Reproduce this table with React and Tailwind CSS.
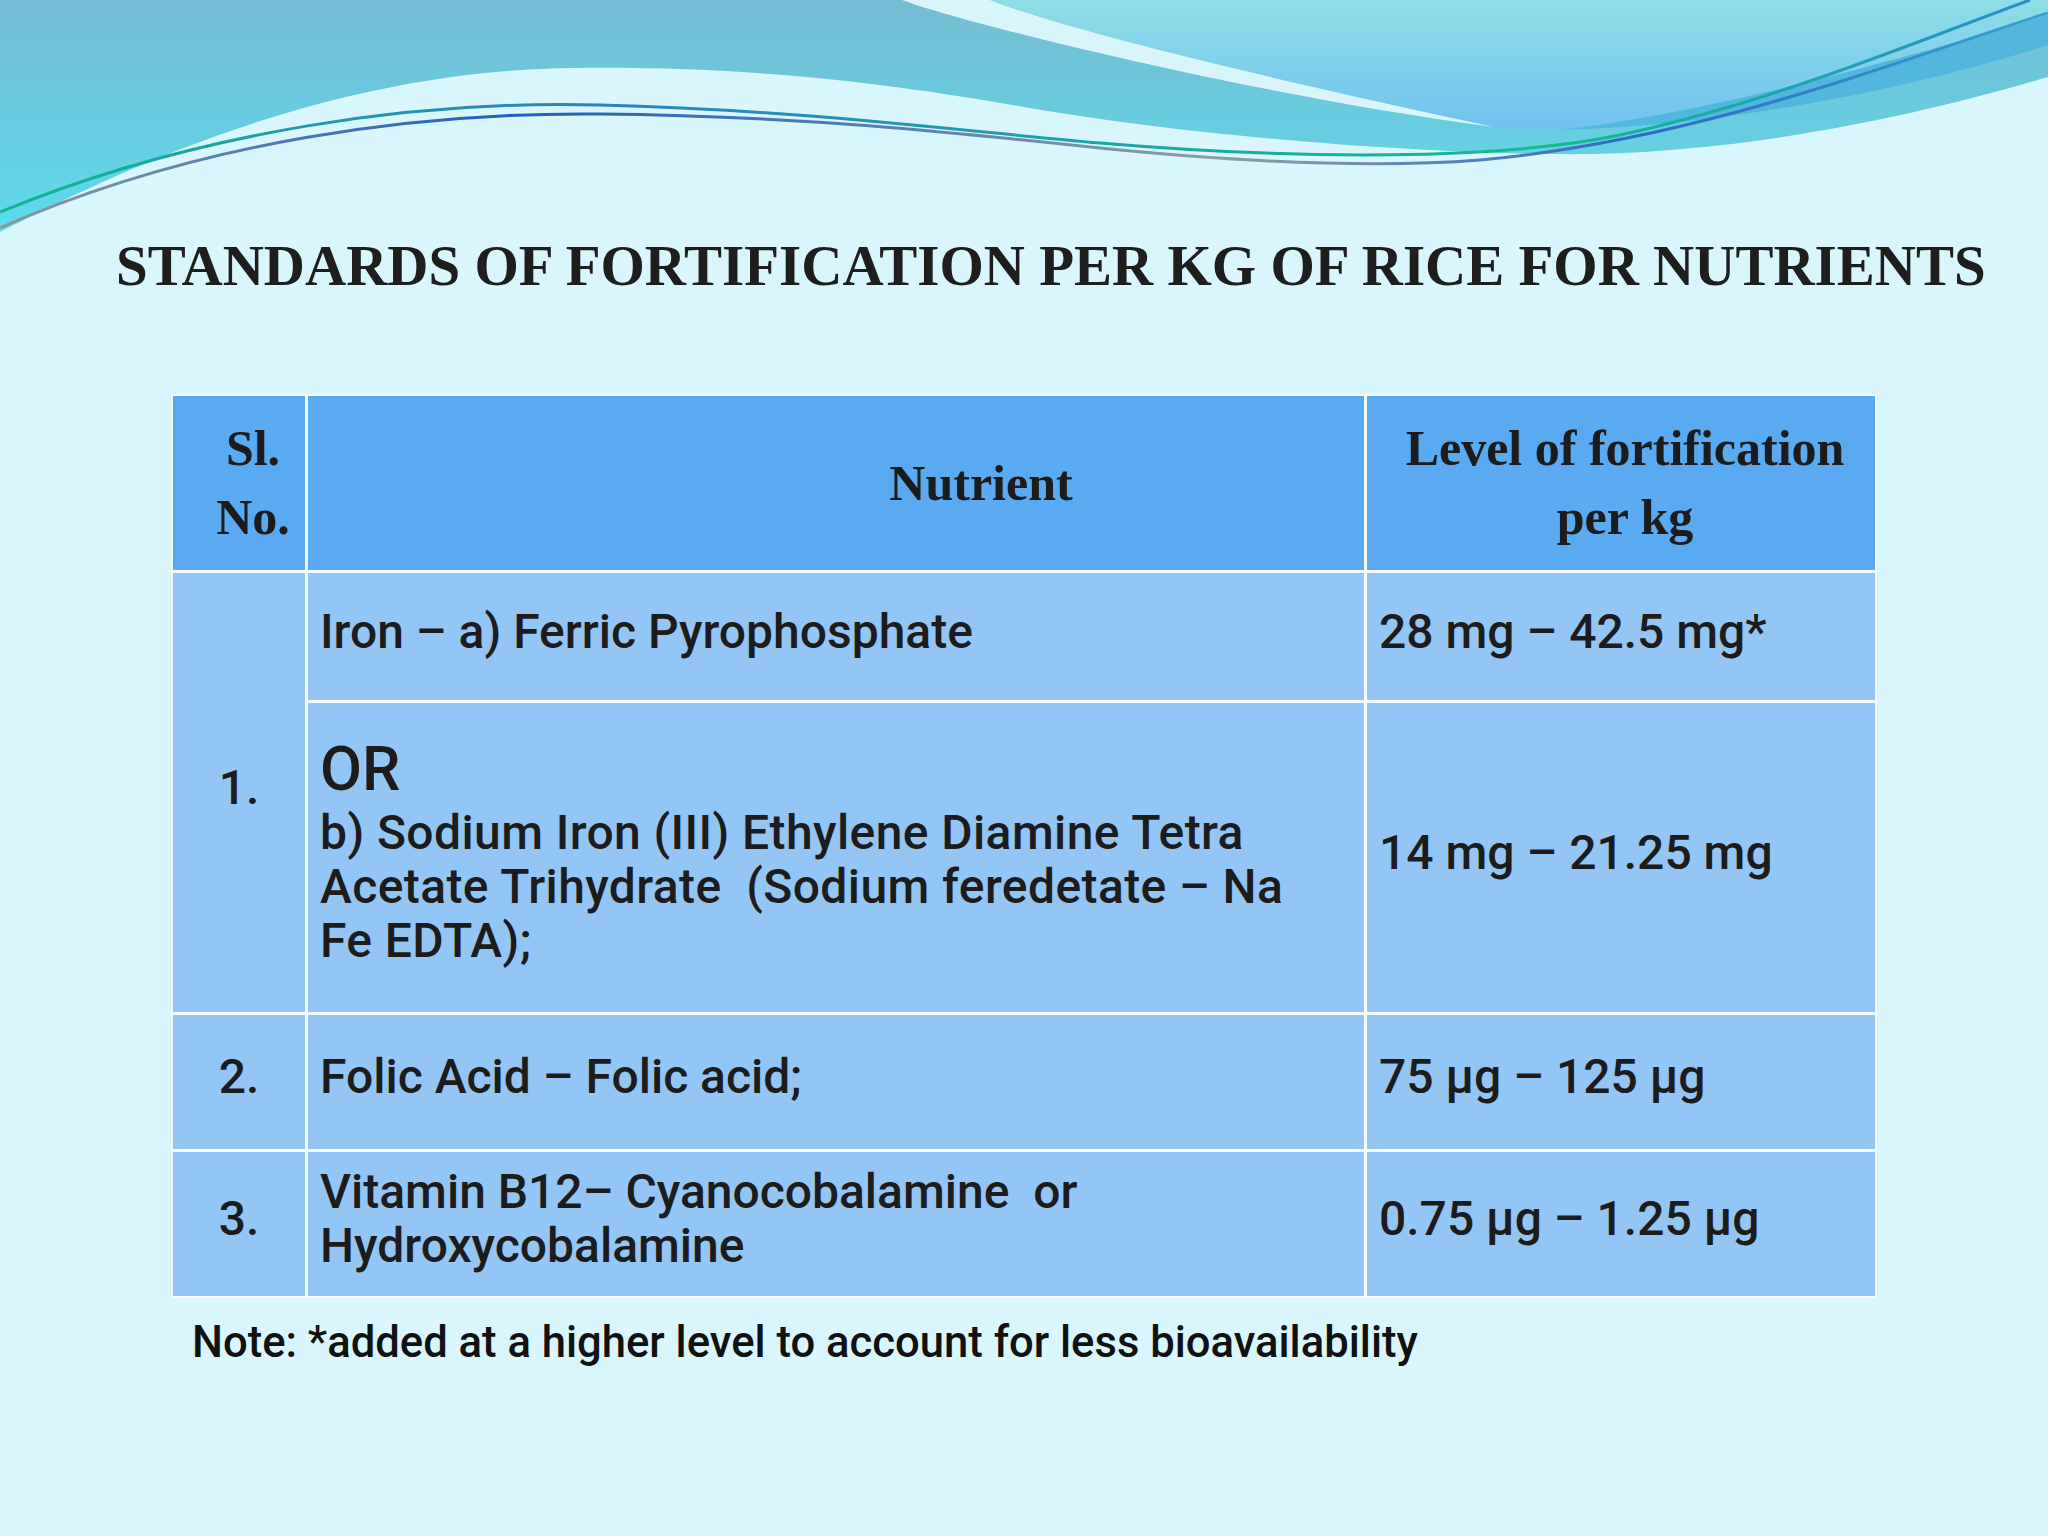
import React from 'react'

const sans = { fontFamily: 'Roboto, "Noto Sans", sans-serif' }

const Waves = () => (
  <svg className="block w-[2048px] h-[240px]" viewBox="0 0 2048 240" fill="none">
    <defs>
      <linearGradient id="gA" x1="0" y1="0" x2="0" y2="1">
        <stop offset="0" stopColor="#76bcd4" />
        <stop offset="1" stopColor="#5ddbea" />
      </linearGradient>
      <linearGradient id="gB" x1="0" y1="0" x2="0" y2="1">
        <stop offset="0" stopColor="#8fdde6" />
        <stop offset="1" stopColor="#72c2f0" />
      </linearGradient>
      <linearGradient id="l1" x1="0" y1="0" x2="1" y2="0">
        <stop offset="0" stopColor="#12b690" />
        <stop offset="0.3" stopColor="#2c82c4" />
        <stop offset="0.55" stopColor="#1aa6a6" />
        <stop offset="0.75" stopColor="#12bc8e" />
        <stop offset="1" stopColor="#2a8fc8" />
      </linearGradient>
      <linearGradient id="l2" x1="0" y1="0" x2="1" y2="0">
        <stop offset="0" stopColor="#8a9aa0" />
        <stop offset="0.25" stopColor="#1f5fc0" />
        <stop offset="0.6" stopColor="#8d9ea4" />
        <stop offset="0.8" stopColor="#2c6cc4" />
        <stop offset="1" stopColor="#3aa0d0" />
      </linearGradient>
    </defs>
    <path d="M0,232 C120,170 330,70 575,68 C760,66 900,85 1024,107 C1200,138 1450,156 1593,154 C1760,150 1920,115 2048,77 V0 H0 Z" fill="url(#gA)" />
    <path d="M990,0 H2048 V15 C1900,60 1700,115 1560,130 C1530,130 1510,129 1494,127 C1300,85 1080,35 990,0 Z" fill="url(#gB)" />
    <path d="M902,0 C960,22 1250,95 1494,127 C1300,85 1080,35 990,0 Z" fill="#d8f5fb" />
    <path d="M1560,130 C1700,115 1900,60 2048,15 V45 C1900,92 1720,126 1560,130 Z" fill="#48b2dc" opacity="0.75" />
    <path d="M0,212 C200,130 420,100 600,105 C800,110 950,130 1100,143 C1300,160 1500,160 1620,135 C1780,100 1920,40 2030,0" stroke="url(#l1)" strokeWidth="3" />
    <path d="M0,228 C200,140 420,112 600,114 C800,116 950,132 1100,148 C1250,163 1380,168 1480,160 C1700,140 1900,60 2048,13" stroke="url(#l2)" strokeWidth="3" />
  </svg>
)

const Cell = ({ className = '', children }) => (
  <div className={`bg-[#93c6f5] flex items-center pl-[12px] pb-[10px] text-[48px] leading-[54px] font-medium text-[#1c1c1c] ${className}`} style={sans}>
    {children}
  </div>
)

const Num = ({ className = '', children }) => (
  <div className={`bg-[#93c6f5] flex items-center justify-center pb-[10px] text-[48px] font-medium text-[#1c1c1c] ${className}`} style={sans}>
    {children}
  </div>
)

export default function App() {
  return (
    <div className="w-[2048px] h-[1536px] bg-[#d9f6fc] overflow-hidden">
      <Waves />

      <h1
        className="pl-[116px] mt-[-2px] text-[57px] leading-[56px] font-bold text-[#1e1e1e] whitespace-nowrap"
        style={{ fontFamily: '"Liberation Serif", "Times New Roman", serif' }}
      >
        STANDARDS OF FORTIFICATION PER KG OF RICE FOR NUTRIENTS
      </h1>

      <div className="ml-[171px] mt-[100px] w-[1706px] grid grid-cols-[132px_1056px_508px] grid-rows-[174px_127px_309px_134px_144px] gap-[3px] p-[2px] bg-[#f4fbfe]">
        {/* header */}
        <div
          className="bg-[#59aaf0] flex flex-col justify-center items-center pl-[28px] text-[50px] leading-[69px] font-bold text-[#1c1c1c]"
          style={{ fontFamily: '"Liberation Serif", serif' }}
        >
          <span>Sl.</span>
          <span>No.</span>
        </div>
        <div
          className="bg-[#59aaf0] flex items-center justify-center pl-[290px] text-[50px] leading-[69px] font-bold text-[#1c1c1c]"
          style={{ fontFamily: '"Liberation Serif", serif' }}
        >
          Nutrient
        </div>
        <div
          className="bg-[#59aaf0] flex flex-col justify-center items-center pl-[8px] text-[50px] leading-[69px] font-bold text-[#1c1c1c] whitespace-nowrap"
          style={{ fontFamily: '"Liberation Serif", serif' }}
        >
          <span>Level of fortification</span>
          <span>per kg</span>
        </div>

        {/* row 1 */}
        <Num className="row-span-2">1.</Num>
        <Cell>Iron – a) Ferric Pyrophosphate</Cell>
        <Cell>28 mg – 42.5 mg*</Cell>

        <Cell>
          <div className="whitespace-pre">
            <div className="text-[61px] leading-[62px] mb-[6px]">OR</div>
            <div className="tracking-[0.4px]">b) Sodium Iron (III) Ethylene Diamine Tetra</div>
            <div className="tracking-[0.4px]">Acetate Trihydrate  (Sodium feredetate – Na</div>
            <div className="tracking-[0.4px]">Fe EDTA);</div>
          </div>
        </Cell>
        <Cell>14 mg – 21.25 mg</Cell>

        {/* row 2 */}
        <Num>2.</Num>
        <Cell>Folic Acid – Folic acid;</Cell>
        <Cell>75 µg – 125 µg</Cell>

        {/* row 3 */}
        <Num>3.</Num>
        <Cell className="leading-[52px]">
          <div className="whitespace-pre">
            <div>Vitamin B12– Cyanocobalamine  or</div>
            <div>Hydroxycobalamine</div>
          </div>
        </Cell>
        <Cell>0.75 µg – 1.25 µg</Cell>
      </div>

      <p className="ml-[192px] mt-[19px] text-[43.6px] leading-[52px] font-medium text-[#111]" style={sans}>
        Note: *added at a higher level to account for less bioavailability
      </p>
    </div>
  )
}
